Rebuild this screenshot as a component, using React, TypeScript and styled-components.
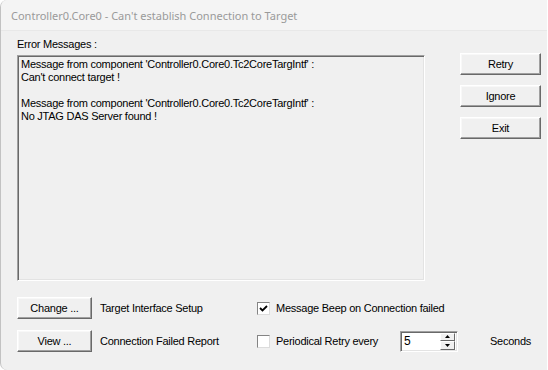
import React from 'react';
import styled, { createGlobalStyle, css } from 'styled-components';

const GlobalStyle = createGlobalStyle`
  html, body {
    margin: 0;
    padding: 0;
    background: #ffffff;
  }
  body {
    font-family: "Liberation Sans", Arial, sans-serif;
    font-size: 11px;
    letter-spacing: -0.25px;
    color: #000;
  }
`;

const sunken = css`
  border-style: solid;
  border-width: 1px;
  border-color: #a0a0a0 #ffffff #ffffff #a0a0a0;
  box-shadow: inset 1px 1px 0 #696969, inset -1px -1px 0 #e3e3e3;
`;

const Window = styled.div`
  width: 547px;
  height: 370px;
  box-sizing: border-box;
  background: #f0f0f0;
  border-left: 1px solid #c2c2c2;
  border-top-left-radius: 7px;
  border-bottom-left-radius: 7px;
  overflow: hidden;
  display: flex;
  flex-direction: column;
`;

const TitleBar = styled.div`
  height: 31px;
  flex-shrink: 0;
  box-sizing: border-box;
  padding-left: 10px;
  display: flex;
  align-items: center;
  background: #f4f4f4;
  border-bottom: 1px solid #e8e8e8;
  color: #9a9a9a;
  font-family: "Noto Sans", "Liberation Sans", sans-serif;
  font-size: 11px;
  letter-spacing: 0;
`;

const Client = styled.div`
  padding: 7px 0 0 16px;
  display: flex;
  flex-direction: column;
`;

const TopSection = styled.div`
  display: flex;
`;

const MessageColumn = styled.div`
  display: flex;
  flex-direction: column;
`;

const Label = styled.div`
  height: 13px;
  line-height: 13px;
  margin-bottom: 4px;
  white-space: nowrap;
`;

const MessageBox = styled.div`
  ${sunken};
  width: 408px;
  height: 226px;
  box-sizing: border-box;
  padding: 2px 3px;
  line-height: 13px;
  background: #f0f0f0;
  white-space: pre;
  overflow: hidden;
`;

const ButtonColumn = styled.div`
  display: flex;
  flex-direction: column;
  gap: 10px;
  padding-top: 15px;
  margin-left: 35px;
`;

const Button = styled.button<{ $width: number }>`
  width: ${p => p.$width}px;
  height: 22px;
  box-sizing: border-box;
  padding: 0;
  font-family: "Liberation Sans", Arial, sans-serif;
  font-size: 11px;
  letter-spacing: -0.25px;
  color: #000;
  background: #f0f0f0;
  border-style: solid;
  border-width: 1px;
  border-color: #ffffff #696969 #696969 #ffffff;
  box-shadow: inset -1px -1px 0 #a0a0a0, inset 1px 1px 0 #f8f8f8;
  border-radius: 0;
`;

const BottomSection = styled.div`
  margin-top: 16px;
  display: flex;
  flex-direction: column;
  gap: 11px;
`;

const Row = styled.div`
  display: flex;
  align-items: center;
  height: 22px;
`;

const Cell = styled.div<{ $width?: number; $indent?: number }>`
  ${p => (p.$width ? `width: ${p.$width}px;` : '')}
  margin-left: ${p => p.$indent ?? 0}px;
  flex-shrink: 0;
  display: flex;
  align-items: center;
  white-space: nowrap;
`;

const CheckBox = styled.span`
  width: 13px;
  height: 13px;
  box-sizing: border-box;
  margin-right: 6px;
  background: #ffffff;
  border: 1px solid;
  border-color: #848484 #dcdcdc #dcdcdc #848484;
  display: flex;
  align-items: center;
  justify-content: center;
`;

const SpinEdit = styled.div`
  ${sunken};
  width: 58px;
  height: 21px;
  box-sizing: border-box;
  background: #ffffff;
  display: flex;
  align-items: stretch;
  padding: 1px 2px 1px 2px;
`;

const SpinValue = styled.div`
  flex: 1;
  padding-left: 1px;
  display: flex;
  align-items: center;
  font-size: 12px;
`;

const SpinButtons = styled.div`
  width: 15px;
  display: flex;
  flex-direction: column;
`;

const SpinButton = styled.div`
  flex: 1;
  box-sizing: border-box;
  background: #f0f0f0;
  border-style: solid;
  border-width: 1px;
  border-color: #ffffff #696969 #696969 #ffffff;
  display: flex;
  align-items: center;
  justify-content: center;
`;

const Check = () => (
  <svg width="9" height="9" viewBox="0 0 9 9">
    <path d="M1 4 L3.5 6.5 L8 2" stroke="#000" strokeWidth="1.8" fill="none" />
  </svg>
);

const Arrow = ({ up }: { up?: boolean }) => (
  <svg width="5" height="3" viewBox="0 0 5 3">
    <path d={up ? 'M0 3 L2.5 0 L5 3 Z' : 'M0 0 L2.5 3 L5 0 Z'} fill="#000" />
  </svg>
);

const messages = [
  "Message from component 'Controller0.Core0.Tc2CoreTargIntf' :",
  "Can't connect target !",
  '',
  "Message from component 'Controller0.Core0.Tc2CoreTargIntf' :",
  'No JTAG DAS Server found !',
].join('\n');

export default function App() {
  return (
    <>
      <GlobalStyle />
      <Window>
        <TitleBar>Controller0.Core0 - Can't establish Connection to Target</TitleBar>
        <Client>
          <TopSection>
            <MessageColumn>
              <Label>Error Messages :</Label>
              <MessageBox>{messages}</MessageBox>
            </MessageColumn>
            <ButtonColumn>
              <Button $width={81}>Retry</Button>
              <Button $width={81}>Ignore</Button>
              <Button $width={81}>Exit</Button>
            </ButtonColumn>
          </TopSection>
          <BottomSection>
            <Row>
              <Button $width={75}>Change ...</Button>
              <Cell $width={157} $indent={8}>Target Interface Setup</Cell>
              <Cell>
                <CheckBox>
                  <Check />
                </CheckBox>
                Message Beep on Connection failed
              </Cell>
            </Row>
            <Row>
              <Button $width={75}>View ...</Button>
              <Cell $width={157} $indent={8}>Connection Failed Report</Cell>
              <Cell $width={143}>
                <CheckBox />
                Periodical Retry every
              </Cell>
              <SpinEdit>
                <SpinValue>5</SpinValue>
                <SpinButtons>
                  <SpinButton>
                    <Arrow up />
                  </SpinButton>
                  <SpinButton>
                    <Arrow />
                  </SpinButton>
                </SpinButtons>
              </SpinEdit>
              <Cell $indent={32}>Seconds</Cell>
            </Row>
          </BottomSection>
        </Client>
      </Window>
    </>
  );
}
